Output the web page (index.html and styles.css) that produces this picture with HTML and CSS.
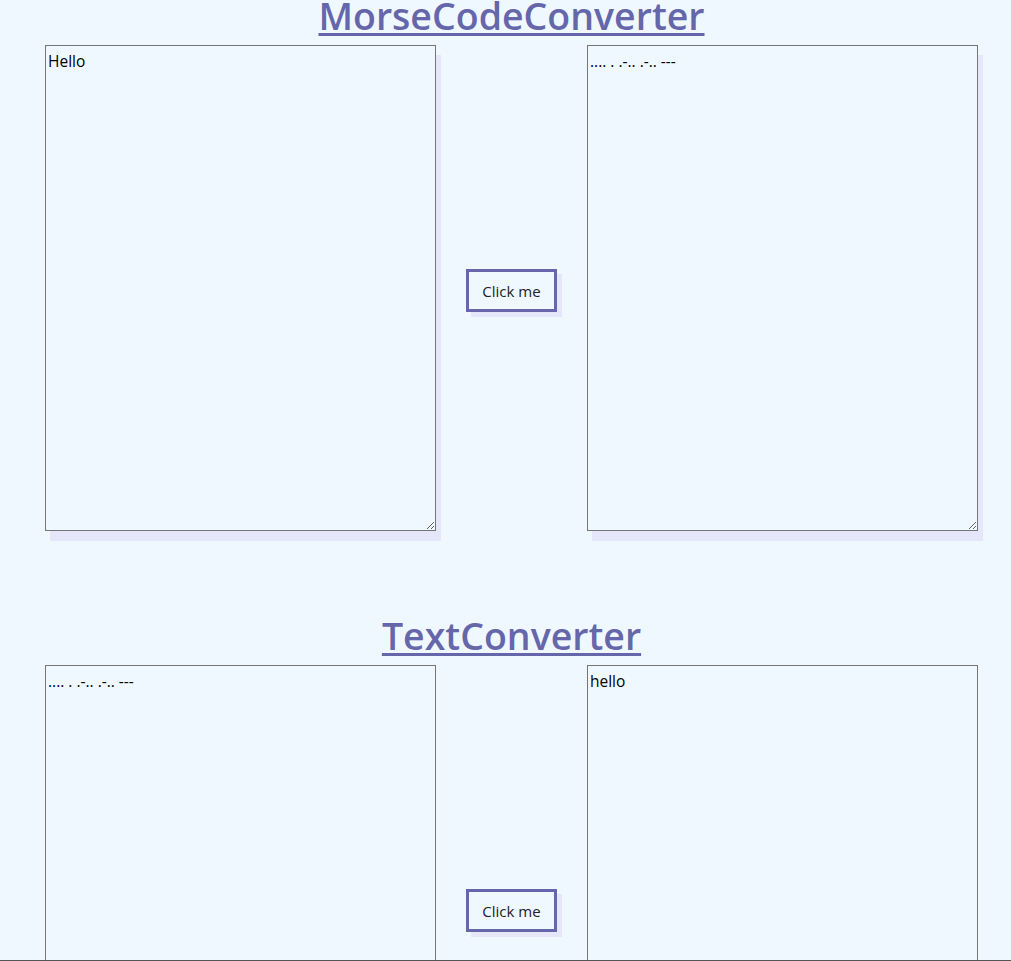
FILE: index.html
```html
<!DOCTYPE html>
<html lang="en">
<head>
<meta charset="utf-8">
<title>Morse Code Converter</title>
<link rel="stylesheet" href="styles.css">
</head>
<body>
  <section class="converter">
    <h1 class="title"><a class="title-link">MorseCodeConverter</a></h1>
    <div class="row">
      <textarea class="box">Hello</textarea>
      <button class="btn">Click me</button>
      <textarea class="box">.... . .-.. .-.. ---</textarea>
    </div>
  </section>
  <section class="converter second">
    <h1 class="title"><a class="title-link">TextConverter</a></h1>
    <div class="row">
      <textarea class="box plain">.... . .-.. .-.. ---</textarea>
      <button class="btn">Click me</button>
      <textarea class="box plain">hello</textarea>
    </div>
  </section>
</body>
</html>
```
FILE: styles.css
```css
html {
  background: #f0f8ff;
}
body {
  margin: 0;
  background: #f0f8ff;
  font-family: "Open Sans", "Noto Sans", sans-serif;
}
body::after {
  content: "";
  position: fixed;
  left: 0;
  right: 0;
  bottom: 0;
  height: 1px;
  background: #555555;
}
.converter {
  display: flex;
  flex-direction: column;
  padding: 0 33px 0 45px;
}
.second {
  margin-top: 89px;
}
.title {
  margin: 0 0 14px 0;
  text-align: center;
  font-size: 37.5px;
  font-weight: 600;
  line-height: 31px;
  color: #6666aa;
}
.title-link {
  color: #6666aa;
  text-decoration: underline;
  text-decoration-thickness: 3px;
  text-underline-offset: 3px;
}
.row {
  display: flex;
  align-items: center;
  gap: 30px;
}
.box {
  box-sizing: border-box;
  width: 391px;
  height: 486px;
  margin: 0;
  padding: 4px 2px 2px 2px;
  border: 1px solid #767676;
  background: #f0f8ff;
  color: #000;
  font-family: "Open Sans", "Noto Sans", sans-serif;
  font-size: 15.5px;
  line-height: 22px;
  box-shadow: 5px 10px 0 #e6e6fa;
  flex: none;
}
.box.plain {
  box-shadow: none;
}
.btn {
  box-sizing: border-box;
  width: 91px;
  height: 43px;
  margin: 5px 0 0 0;
  border: 3px solid #6666aa;
  background: #f0f8ff;
  color: #222;
  font-family: "Open Sans", "Noto Sans", sans-serif;
  font-size: 15px;
  box-shadow: 5px 5px 0 #e6e6fa;
  flex: none;
  padding: 0;
}
```
